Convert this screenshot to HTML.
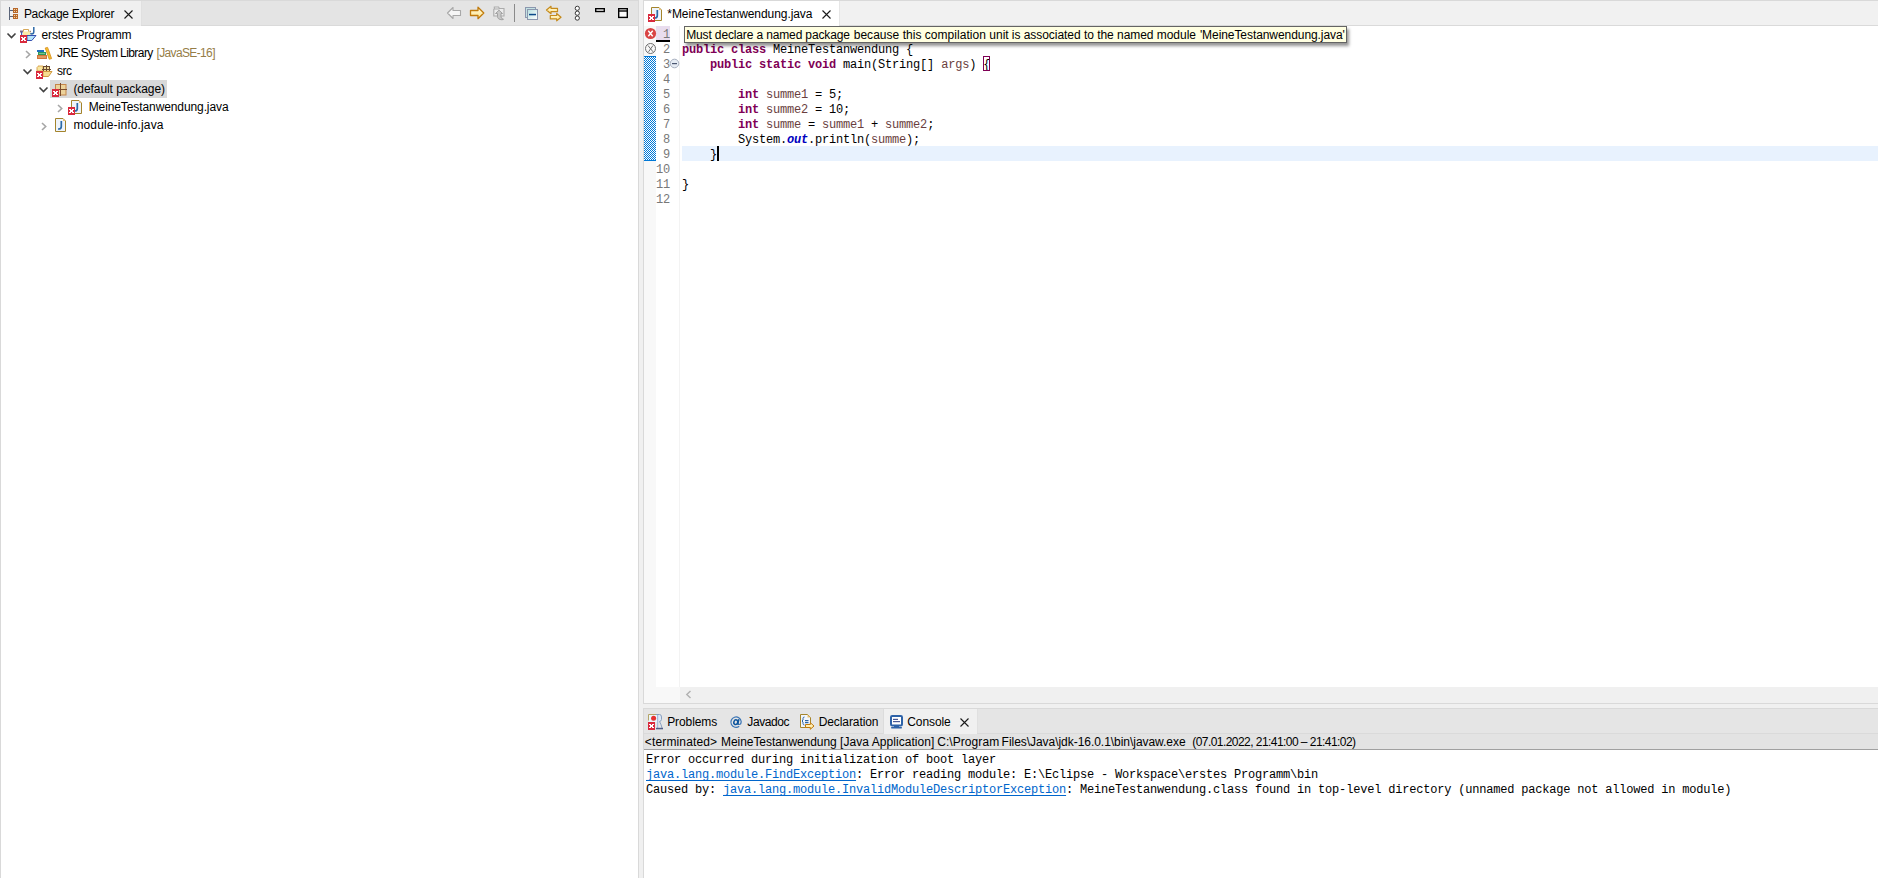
<!DOCTYPE html>
<html><head><meta charset="utf-8"><style>
html,body{margin:0;padding:0;width:1878px;height:878px;overflow:hidden;background:#fff;position:relative}
.a{position:absolute}
.t{font-family:"Liberation Sans",sans-serif;font-size:12px;line-height:18px;white-space:pre}
.m{font-family:"Liberation Mono",monospace;font-size:12px;letter-spacing:-0.2px;line-height:15px;white-space:pre;color:#000;padding-top:2px}
.ln{color:#787878}
svg{overflow:visible}
</style></head><body>
<div class="a" style="left:0px;top:0px;width:1px;height:878px;background:#d9d9d9;"></div>
<div class="a" style="left:638px;top:0px;width:1px;height:878px;background:#d9d9d9;"></div>
<div class="a" style="left:0px;top:0px;width:639px;height:1px;background:#d9d9d9;"></div>
<div class="a" style="left:1px;top:1px;width:637px;height:24px;background:#e4e4e4;"></div>
<div class="a" style="left:1px;top:25px;width:637px;height:1px;background:#dadada;"></div>
<div class="a" style="left:1px;top:1px;width:140px;height:25px;background:#f0f0f0;"></div>
<div class="a" style="left:141px;top:1px;width:1px;height:24px;background:#e0e0e0;"></div>
<div class="a" style="left:639px;top:0px;width:4px;height:878px;background:#f0f0f0;"></div>
<div class="a" style="left:643px;top:0px;width:1px;height:704px;background:#d9d9d9;"></div>
<div class="a" style="left:643px;top:0px;width:1235px;height:1px;background:#d9d9d9;"></div>
<div class="a" style="left:644px;top:1px;width:1234px;height:24px;background:#f1f1f1;"></div>
<div class="a" style="left:644px;top:25px;width:1234px;height:1px;background:#dadada;"></div>
<div class="a" style="left:644px;top:1px;width:195px;height:25px;background:#ffffff;"></div>
<div class="a" style="left:839px;top:1px;width:1px;height:24px;background:#e6e6e6;"></div>
<div class="a" style="left:644px;top:26px;width:12px;height:661px;background:#f8f8f8;"></div>
<div class="a" style="left:679px;top:26px;width:1px;height:661px;background:#f3f3f3;"></div>
<div class="a" style="left:644px;top:687px;width:36px;height:16px;background:#f8f8f8;"></div>
<div class="a" style="left:680px;top:687px;width:1198px;height:16px;background:#f0f0f0;"></div>
<div class="a" style="left:644px;top:703px;width:1234px;height:1px;background:#d9d9d9;"></div>
<div class="a" style="left:643px;top:704px;width:1235px;height:4px;background:#f0f0f0;"></div>
<div class="a" style="left:643px;top:708px;width:1235px;height:1px;background:#d9d9d9;"></div>
<div class="a" style="left:643px;top:708px;width:1px;height:170px;background:#d9d9d9;"></div>
<div class="a" style="left:644px;top:709px;width:1234px;height:25px;background:#e5e5e5;"></div>
<div class="a" style="left:644px;top:733px;width:1234px;height:1px;background:#dadada;"></div>
<div class="a" style="left:883px;top:709px;width:1px;height:25px;background:#dcdcdc;"></div>
<div class="a" style="left:884px;top:709px;width:93px;height:25px;background:#f0f0f0;"></div>
<div class="a" style="left:977px;top:709px;width:1px;height:24px;background:#e0e0e0;"></div>
<div class="a" style="left:644px;top:734px;width:1234px;height:15px;background:#e3e3e3;"></div>
<div class="a" style="left:644px;top:749px;width:1234px;height:1px;background:#a0a0a0;"></div>
<div id="pe" class="a t" style="left:23.90px;top:5px;color:#000;letter-spacing:-0.273px;">Package Explorer</div>
<div id="t1" class="a t" style="left:41.50px;top:26px;color:#000;letter-spacing:-0.143px;">erstes Programm</div>
<div id="t2" class="a t" style="left:57.00px;top:44px;color:#000;letter-spacing:-0.571px;">JRE System Library</div>
<div id="t2b" class="a t" style="left:156.50px;top:44px;color:#957d47;letter-spacing:-0.640px;">[JavaSE-16]</div>
<div id="t3" class="a t" style="left:57.00px;top:62px;color:#000;letter-spacing:-0.500px;">src</div>
<div class="a" style="left:50px;top:80px;width:117px;height:18px;background:#d9d9d9;"></div>
<div id="t4" class="a t" style="left:73.40px;top:80px;color:#000;letter-spacing:-0.069px;">(default package)</div>
<div id="t5" class="a t" style="left:88.70px;top:98px;color:#000;letter-spacing:-0.100px;">MeineTestanwendung.java</div>
<div id="t6" class="a t" style="left:73.40px;top:116px;color:#000;letter-spacing:0.133px;">module-info.java</div>
<div id="et" class="a t" style="left:667.30px;top:5px;color:#000;letter-spacing:-0.070px;">*MeineTestanwendung.java</div>
<div id="pr" class="a t" style="left:667.20px;top:713px;color:#000;letter-spacing:-0.100px;">Problems</div>
<div id="jd" class="a t" style="left:747.30px;top:713px;color:#000;letter-spacing:-0.417px;">Javadoc</div>
<div id="de" class="a t" style="left:818.70px;top:713px;color:#000;letter-spacing:-0.090px;">Declaration</div>
<div id="co" class="a t" style="left:907.30px;top:713px;color:#000;letter-spacing:-0.100px;">Console</div>
<div id="ci1" class="a t" style="left:644.80px;top:733px;color:#000;letter-spacing:0.145px;">&lt;terminated&gt;</div>
<div id="ci2" class="a t" style="left:721.00px;top:733px;color:#000;letter-spacing:-0.059px;">MeineTestanwendung</div>
<div id="ci3" class="a t" style="left:840.00px;top:733px;color:#000;letter-spacing:0.059px;">[Java Application]</div>
<div id="ci4" class="a t" style="left:937.20px;top:733px;color:#000;letter-spacing:0.067px;">C:\Program</div>
<div id="ci5" class="a t" style="left:1001.60px;top:733px;color:#000;letter-spacing:-0.041px;">Files\Java\jdk-16.0.1\bin\javaw.exe</div>
<div id="ci6" class="a t" style="left:1192.20px;top:733px;color:#000;letter-spacing:-0.550px;">(07.01.2022, 21:41:00 – 21:41:02)</div>
<div class="a" style="left:682px;top:146px;width:1196px;height:15px;background:#e8f2fe;"></div>
<div class="a" style="left:656px;top:26px;width:14px;height:14px;background:#e9ddee;"></div>
<div class="a m ln" style="left:663px;top:26px">1</div>
<div class="a m" style="left:682px;top:41px"><span style="color:#7f0055;font-weight:bold">public</span> <span style="color:#7f0055;font-weight:bold">class</span> MeineTestanwendung {</div>
<div class="a m ln" style="left:663px;top:41px">2</div>
<div class="a m" style="left:682px;top:56px">    <span style="color:#7f0055;font-weight:bold">public</span> <span style="color:#7f0055;font-weight:bold">static</span> <span style="color:#7f0055;font-weight:bold">void</span> main(String[] <span style="color:#6a3e3e">args</span>) {</div>
<div class="a m ln" style="left:663px;top:56px">3</div>
<div class="a m ln" style="left:663px;top:71px">4</div>
<div class="a m" style="left:682px;top:86px">        <span style="color:#7f0055;font-weight:bold">int</span> <span style="color:#6a3e3e">summe1</span> = 5;</div>
<div class="a m ln" style="left:663px;top:86px">5</div>
<div class="a m" style="left:682px;top:101px">        <span style="color:#7f0055;font-weight:bold">int</span> <span style="color:#6a3e3e">summe2</span> = 10;</div>
<div class="a m ln" style="left:663px;top:101px">6</div>
<div class="a m" style="left:682px;top:116px">        <span style="color:#7f0055;font-weight:bold">int</span> <span style="color:#6a3e3e">summe</span> = <span style="color:#6a3e3e">summe1</span> + <span style="color:#6a3e3e">summe2</span>;</div>
<div class="a m ln" style="left:663px;top:116px">7</div>
<div class="a m" style="left:682px;top:131px">        System.<span style="color:#0000c0;font-weight:bold;font-style:italic">out</span>.println(<span style="color:#6a3e3e">summe</span>);</div>
<div class="a m ln" style="left:663px;top:131px">8</div>
<div class="a m" style="left:682px;top:146px">    }</div>
<div class="a m ln" style="left:663px;top:146px">9</div>
<div class="a m ln" style="left:656px;top:161px">10</div>
<div class="a m" style="left:682px;top:176px">}</div>
<div class="a m ln" style="left:656px;top:176px">11</div>
<div class="a m ln" style="left:656px;top:191px">12</div>
<div class="a" style="left:656px;top:40px;width:14px;height:2px;background:#000;"></div>
<div class="a" style="left:983px;top:56px;width:7px;height:15px;background:transparent;box-sizing:border-box;border:1px solid #7f0055"></div>
<div class="a" style="left:717px;top:146px;width:2px;height:15px;background:#000;"></div>
<svg class="a" style="left:644px;top:56px;shape-rendering:crispEdges" width="12" height="105" viewBox="0 0 12 105"><defs><pattern id="ck" width="2" height="2" patternUnits="userSpaceOnUse"><rect width="2" height="2" fill="#fff"/><rect width="1" height="1" fill="#0078d7"/><rect x="1" y="1" width="1" height="1" fill="#0078d7"/></pattern></defs><rect width="12" height="105" fill="url(#ck)"/><rect width="12" height="1" fill="#0078d7"/><rect y="104" width="12" height="1" fill="#0078d7"/></svg>
<div class="a" style="left:684px;top:26px;width:663px;height:17px;box-sizing:border-box;background:#ffffe1;border:1px solid #646464;box-shadow:2px 3px 3px rgba(0,0,0,0.42)"></div>
<div id="tt1" class="a t" style="left:686.20px;top:26px;color:#000;letter-spacing:-0.137px;">Must declare a named package</div>
<div id="tt2" class="a t" style="left:853.70px;top:26px;color:#000;letter-spacing:0.032px;">because this compilation unit</div>
<div id="tt3" class="a t" style="left:1011.80px;top:26px;color:#000;letter-spacing:-0.041px;">is associated to the named module</div>
<div id="tt4" class="a t" style="left:1199.90px;top:26px;color:#000;letter-spacing:-0.071px;">&#x27;MeineTestanwendung.java&#x27;</div>
<div class="a m" style="left:646px;top:751px">Error occurred during initialization of boot layer</div>
<div class="a m" style="left:646px;top:766px"><span style="color:#0066cc;text-decoration:underline;text-decoration-skip-ink:none;text-underline-offset:2px">java.lang.module.FindException</span>: Error reading module: E:\Eclipse - Workspace\erstes Programm\bin</div>
<div class="a m" style="left:646px;top:781px">Caused by: <span style="color:#0066cc;text-decoration:underline;text-decoration-skip-ink:none;text-underline-offset:2px">java.lang.module.InvalidModuleDescriptorException</span>: MeineTestanwendung.class found in top-level directory (unnamed package not allowed in module)</div>
<svg class="a" style="left:0;top:0" width="1878" height="878" viewBox="0 0 1878 878"><rect x="9" y="7" width="1" height="13" fill="#5b6579"/><rect x="10" y="10" width="3" height="1" fill="#5b6579"/><rect x="10" y="16" width="3" height="1" fill="#5b6579"/><rect x="13" y="8" width="5" height="5" fill="#b8672a"/><rect x="14" y="9" width="1" height="1" fill="#f0d8a8"/><rect x="16" y="9" width="1" height="1" fill="#f0d8a8"/><rect x="14" y="11" width="1" height="1" fill="#f0d8a8"/><rect x="16" y="11" width="1" height="1" fill="#f0d8a8"/><rect x="13" y="14" width="5" height="5" fill="#b8672a"/><rect x="14" y="15" width="1" height="1" fill="#f0d8a8"/><rect x="16" y="15" width="1" height="1" fill="#f0d8a8"/><rect x="14" y="17" width="1" height="1" fill="#f0d8a8"/><rect x="16" y="17" width="1" height="1" fill="#f0d8a8"/><path d="M124.5 10.5 L132.5 18.5 M132.5 10.5 L124.5 18.5" stroke="#1a1a1a" stroke-width="1.1"/><path d="M447.5 13 L453 7.5 V10.5 H460.5 V15.5 H453 V18.5 Z" fill="#f6f6f6" stroke="#a8a8a8" stroke-width="1.1" stroke-linejoin="round"/><defs><linearGradient id="yg" x1="0" y1="0" x2="0" y2="1"><stop offset="0" stop-color="#fffbe0"/><stop offset="1" stop-color="#ffe48a"/></linearGradient><linearGradient id="tg" x1="0" y1="0" x2="1" y2="1"><stop offset="0" stop-color="#b8e0e0"/><stop offset="1" stop-color="#ffffff"/></linearGradient></defs><path d="M483.8 13 L478 7.3 V10.5 H470.5 V15.5 H478 V18.7 Z" fill="url(#yg)" stroke="#c07a0c" stroke-width="1.3" stroke-linejoin="round"/><path d="M493.8 9 H499.5 M494.3 8.8 V7 H498.5 L499.5 8.5 H504 V16 H493.8 V9" fill="#ececec" stroke="#ababab" stroke-width="1.1"/><path d="M499 10.2 L502.6 13.5 H501 V17 Q501.5 19 503.5 19.3 L502 19.8 Q497.5 19.5 497.5 16.5 V13.5 H495.5 Z" fill="#c8c8c8" stroke="#9c9c9c" stroke-width="0.9"/><rect x="514" y="4" width="1" height="18" fill="#8a8a8a"/><rect x="525.5" y="7.5" width="10" height="10" fill="#c4e2e2" stroke="#8b97ae" stroke-width="1"/><rect x="527.5" y="9.5" width="10" height="10" fill="url(#tg)" stroke="#8b97ae" stroke-width="1"/><rect x="529" y="13.8" width="7" height="1.5" fill="#0b4a8a"/><path d="M546.5 10 L551 6.3 V8.3 H557.5 V11.7 H551 V13.7 Z" fill="url(#yg)" stroke="#c58a1c" stroke-width="1.2" stroke-linejoin="round"/><path d="M561 17.2 L556.7 13.5 V15.5 H550.3 V18.9 H556.7 V20.8 Z" fill="url(#yg)" stroke="#c58a1c" stroke-width="1.2" stroke-linejoin="round"/><circle cx="577.3" cy="8.3" r="2.1" fill="#fff" stroke="#3a3a3a" stroke-width="1"/><circle cx="577.3" cy="13.2" r="2.1" fill="#fff" stroke="#3a3a3a" stroke-width="1"/><circle cx="577.3" cy="18.1" r="2.1" fill="#fff" stroke="#3a3a3a" stroke-width="1"/><rect x="595.7" y="8.7" width="8.6" height="2.8" fill="#fafafa" stroke="#000" stroke-width="1.4"/><rect x="618.7" y="8.7" width="8.6" height="8.7" fill="#fafafa" stroke="#000" stroke-width="1.4"/><rect x="618" y="10.3" width="10" height="1.4" fill="#000"/><path d="M7.5 33.5 L11.5 37.5 L15.5 33.5" fill="none" stroke="#404040" stroke-width="1.6"/><path d="M26 51 L29.7 54.5 L26 58" fill="none" stroke="#a6a6a6" stroke-width="1.6"/><path d="M23.5 69.5 L27.5 73.5 L31.5 69.5" fill="none" stroke="#404040" stroke-width="1.6"/><path d="M39.5 87.5 L43.5 91.5 L47.5 87.5" fill="none" stroke="#404040" stroke-width="1.6"/><path d="M58 105 L61.7 108.5 L58 112" fill="none" stroke="#a6a6a6" stroke-width="1.6"/><path d="M42 123 L45.7 126.5 L42 130" fill="none" stroke="#a6a6a6" stroke-width="1.6"/><rect x="20" y="30.5" width="3" height="2" fill="#7a6a8a"/><rect x="21" y="32" width="1.2" height="3" fill="#4060b0"/><rect x="29.5" y="30.8" width="1.5" height="1.4" fill="#7a6a7a"/><path d="M23 35 V29.3 H28.8 V31.5 H30.5 V35 Z" fill="#fbe9a8"/><path d="M23.5 31.5 V29.5 H28.5 V31.5" fill="#fff" stroke="#d6a85a" stroke-width="1"/><path d="M33.8 27 V31.8 Q33.8 34 31.8 34 Q31 34 30.5 33.3" fill="none" stroke="#2e6aa8" stroke-width="1.5"/><path d="M27 35.5 H36 L31.8 40.5 H27 Z" fill="#b3e2fa" stroke="#3550b0" stroke-width="1"/><rect x="20" y="35" width="7" height="8" fill="#d92a3e"/><path fill="#fff" d="M21 37h2v1h-2z M24 37h2v1h-2z M22 38h3v2h-3z M21 40h2v1h-2z M24 40h2v1h-2z"/><rect x="37" y="50" width="7" height="2" fill="#1f6fc0"/><rect x="38" y="52" width="8" height="3" fill="#2e9a5a"/><rect x="39" y="53" width="6" height="1" fill="#7cc090"/><rect x="37" y="55" width="10" height="4" fill="#d2743a"/><rect x="38" y="56" width="8" height="2" fill="#e09a60"/><path d="M45.2 48 L47.6 47.4 L51.6 58.6 L49.2 59.2 Z" fill="#f2c030" stroke="#d88a18" stroke-width="0.8"/><path d="M37 71 V67.5 L38 66.5 V66 H43 V71 Z" fill="#f8e6a0" stroke="#d8a048" stroke-width="0.9"/><rect x="43.5" y="66.5" width="6" height="6" fill="#f4dc98" stroke="#6a4a30" stroke-width="1"/><path d="M46.5 65 V72 M42 69.5 H51" stroke="#6a4a30" stroke-width="1"/><path d="M43 71.5 H52 L48.5 76.5 H43 Z" fill="#f6dc90" stroke="#d09a40" stroke-width="1"/><rect x="36" y="71" width="7" height="8" fill="#d92a3e"/><path fill="#fff" d="M37 73h2v1h-2z M40 73h2v1h-2z M38 74h3v2h-3z M37 76h2v1h-2z M40 76h2v1h-2z"/><rect x="55.5" y="84.5" width="10.5" height="10.5" fill="#ecd29a" stroke="#c4854a" stroke-width="1"/><path d="M60.5 83 V96 M57 89.5 H67" stroke="#7a4a2a" stroke-width="1"/><rect x="52" y="89" width="7" height="8" fill="#d92a3e"/><path fill="#fff" d="M53 91h2v1h-2z M56 91h2v1h-2z M54 92h3v2h-3z M53 94h2v1h-2z M56 94h2v1h-2z"/><path d="M71.5 100.5 H79 L81.5 103 V113.5 H71.5 Z" fill="#eef4fb" stroke="#a4842c" stroke-width="1"/><path d="M79 100.5 V103 H81.5 Z" fill="#e8c070"/><path d="M77.3 103 V108.5 Q77.3 111 74.8 111 H74" fill="none" stroke="#2c6aa6" stroke-width="1.7"/><rect x="68" y="107" width="7" height="8" fill="#d92a3e"/><path fill="#fff" d="M69 109h2v1h-2z M72 109h2v1h-2z M70 110h3v2h-3z M69 112h2v1h-2z M72 112h2v1h-2z"/><path d="M55.5 118.5 H63 L65.5 121 V131.5 H55.5 Z" fill="#eef4fb" stroke="#a4842c" stroke-width="1"/><path d="M63 118.5 V121 H65.5 Z" fill="#e8c070"/><path d="M61.3 121 V126.5 Q61.3 129 58.8 129 H58" fill="none" stroke="#2c6aa6" stroke-width="1.7"/><path d="M651.5 7.5 H659 L661.5 10 V20.5 H651.5 Z" fill="#eef4fb" stroke="#a4842c" stroke-width="1"/><path d="M659 7.5 V10 H661.5 Z" fill="#e8c070"/><path d="M657.3 10 V15.5 Q657.3 18 654.8 18 H654" fill="none" stroke="#2c6aa6" stroke-width="1.7"/><rect x="648" y="14" width="7" height="8" fill="#d92a3e"/><path fill="#fff" d="M649 16h2v1h-2z M652 16h2v1h-2z M650 17h3v2h-3z M649 19h2v1h-2z M652 19h2v1h-2z"/><path d="M822.5 10.5 L830.5 18.5 M830.5 10.5 L822.5 18.5" stroke="#1a1a1a" stroke-width="1.1"/><circle cx="650.5" cy="33.5" r="5.6" fill="#d94444"/><path d="M648.3 30.8 L652.7 36.3 M652.7 30.8 L648.3 36.3" stroke="#fff" stroke-width="1.4"/><circle cx="650.5" cy="48.5" r="5" fill="none" stroke="#6e6e6e" stroke-width="1"/><path d="M648 45.5 L653 51.8 M653 45.5 L648.5 51.8" stroke="#6e6e6e" stroke-width="1"/><circle cx="674.5" cy="63.5" r="4.3" fill="#e6ecf4" stroke="#a8b0c0" stroke-width="1"/><rect x="672" y="63" width="5" height="1.2" fill="#4a5670"/><path d="M690.5 691 L686.8 694.5 L690.5 698" fill="none" stroke="#b0b0b0" stroke-width="1.4"/><path d="M648.5 720.5 V714.5 H656" fill="none" stroke="#b4a468" stroke-width="1"/><rect x="649" y="715" width="8" height="7" fill="#eaf6fb"/><circle cx="653.6" cy="718.3" r="2.5" fill="#e63232"/><path d="M656 714.5 H659.5 Q661.5 714.5 661.5 717 V719.5 Q661.5 721 659.5 721.5 Q661.5 725 662 728" fill="#dce8f6" stroke="#8aa0c0" stroke-width="1"/><rect x="657" y="715" width="1.2" height="13" fill="#a8bce0"/><rect x="656" y="727.8" width="7" height="1.5" fill="#505e88"/><rect x="648" y="722" width="7" height="8" fill="#d92a3e"/><path fill="#fff" d="M649 724h2v1h-2z M652 724h2v1h-2z M650 725h3v2h-3z M649 727h2v1h-2z M652 727h2v1h-2z"/><path d="M739.2 726.3 A5.2 5.2 0 1 1 741.2 721.5 Q741.2 724.5 739.2 724.5 Q737.9 724.5 738.3 723" fill="none" stroke="#3a74b4" stroke-width="1.2"/><ellipse cx="735.8" cy="722.2" rx="1.9" ry="2.4" transform="rotate(20 735.8 722.2)" fill="none" stroke="#0d559d" stroke-width="1.5"/><path d="M738.9 719.2 L737.6 724.6" stroke="#0d559d" stroke-width="1.5"/><path d="M800.5 714.5 H807.5 L810.5 717.5 V727.5 H800.5 Z" fill="#f2f6fc" stroke="#a4842c" stroke-width="1"/><path d="M807.5 714.5 V717.5 H810.5 Z" fill="#e8c070"/><path d="M804.5 717 Q803 717 803 718.5 V720 L802 721 L803 722 V723.5 Q803 725 804.5 725" fill="none" stroke="#2c64a4" stroke-width="1"/><rect x="805" y="720" width="3.5" height="1.2" fill="#2c64a4"/><rect x="805" y="722" width="3.5" height="1.2" fill="#2c64a4"/><path d="M814 726 L810.3 722.7 V724.5 H805.5 V727.5 H810.3 V729.3 Z" fill="url(#yg)" stroke="#c07a0c" stroke-width="1" stroke-linejoin="round"/><rect x="891" y="716" width="11" height="9.5" rx="1.2" fill="#fff" stroke="#2d62a8" stroke-width="2"/><rect x="893" y="718.8" width="5" height="1.2" fill="#4a5a96"/><rect x="893" y="721" width="7" height="1.2" fill="#4a5a96"/><rect x="894" y="725.5" width="5" height="1.8" fill="#2d62a8"/><rect x="891" y="727" width="11" height="1.5" rx="0.7" fill="#2d62a8"/><path d="M960.5 718.5 L968.5 726.5 M968.5 718.5 L960.5 726.5" stroke="#1a1a1a" stroke-width="1.1"/></svg>
</body></html>
